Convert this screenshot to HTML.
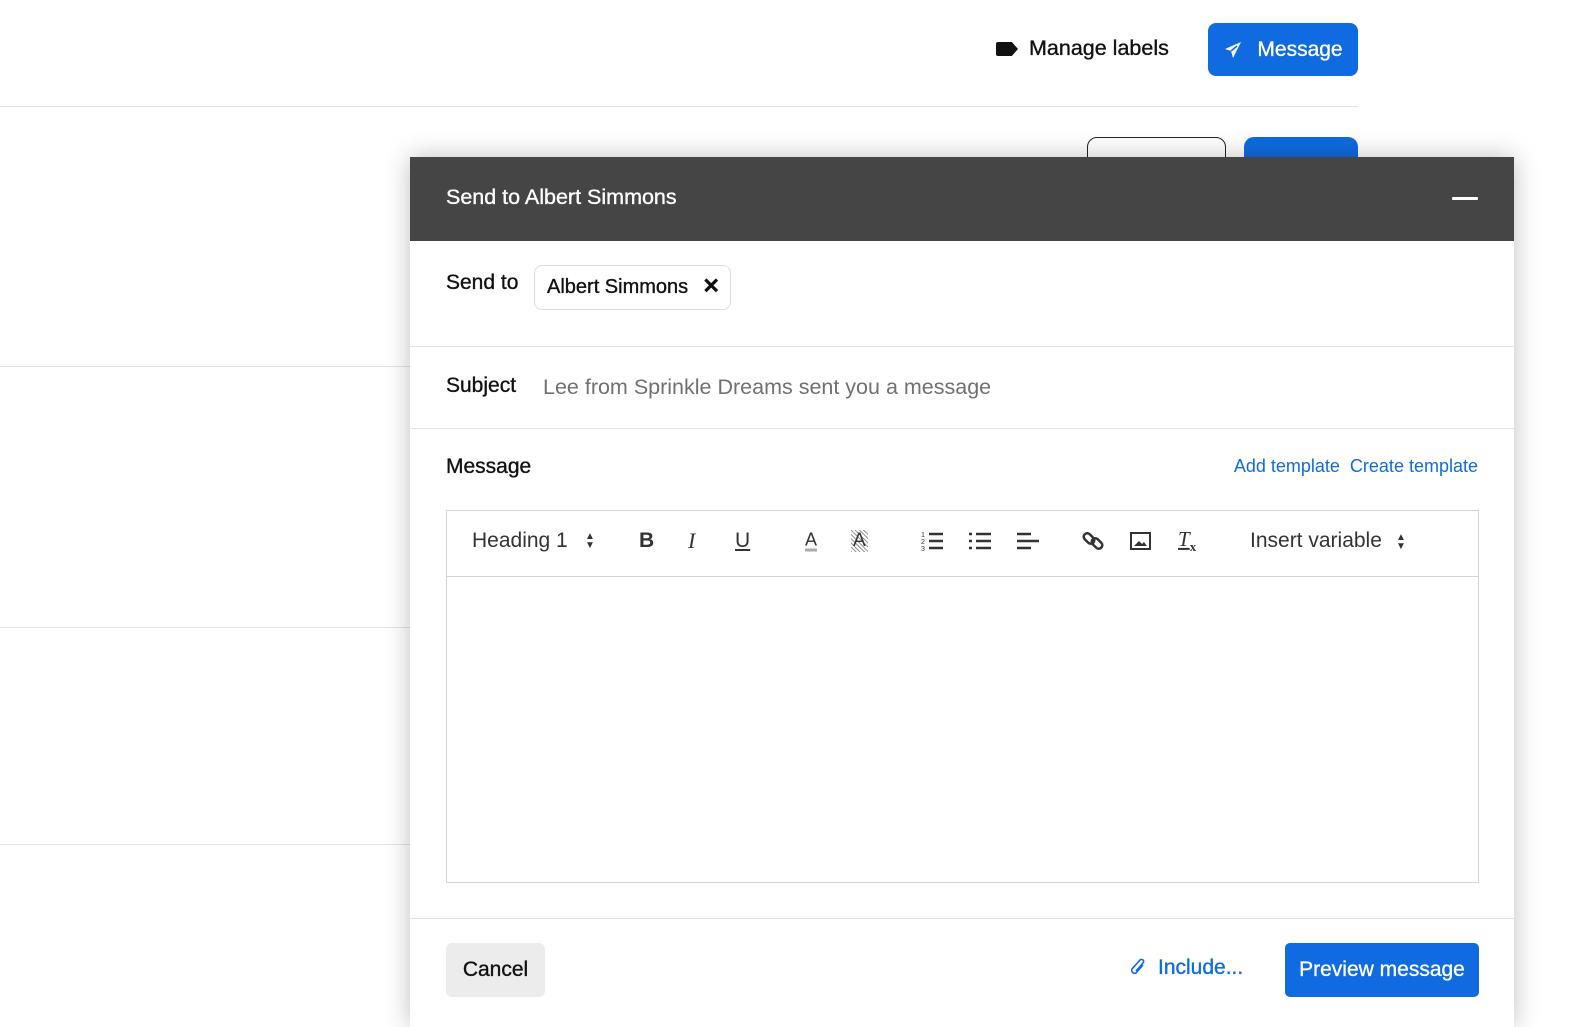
<!DOCTYPE html>
<html><head><meta charset="utf-8"><style>
*{box-sizing:border-box;margin:0;padding:0}
body{width:1576px;height:1024px;overflow:hidden;background:#fff;font-family:"Liberation Sans",sans-serif;color:#111;position:relative}
.abs{position:absolute}
.m{-webkit-text-stroke:0.35px currentColor}
.line{position:absolute;height:1px;background:#e2e2e2}
.btn{position:absolute;border-radius:8px;background:#0f6bdf;color:#fff;font-size:21px;display:flex;align-items:center;justify-content:center;-webkit-text-stroke:0.35px #fff}
.modal{position:absolute;left:410px;top:157px;width:1104px;height:870px;background:#fff;box-shadow:0 0 24px rgba(0,0,0,.25)}
.hdr{height:84px;background:#454545;color:#fff;font-size:21.5px;padding:28px 36px}
.lbl{position:absolute;font-size:21px;color:#111}
.tb{position:absolute;top:30px;transform:translateY(-50%);color:#333}
a{color:#0f6bdf;text-decoration:none}
</style></head><body>
<div class="abs" style="left:996px;top:42px;width:22px;height:14px;background:#111;border-radius:2px 0 0 2px;clip-path:polygon(0 0,72% 0,100% 50%,72% 100%,0 100%)"></div>
<div class="abs m" style="left:1029px;top:36px;font-size:21.5px">Manage labels</div>
<div class="btn" style="left:1208px;top:23px;width:150px;height:53px">
<svg width="20" height="20" viewBox="0 0 20 20" style="margin-right:14px"><path d="M18 2L2 9l6 2 2 7z" fill="#fff"/><path d="M8 11l6-5" stroke="#0f6bdf" stroke-width="1.5"/></svg>Message</div>
<div class="line" style="left:0;top:106px;width:1358px"></div>
<div class="abs" style="left:1087px;top:137px;width:139px;height:40px;border:1px solid #222;border-radius:10px"></div>
<div class="abs" style="left:1244px;top:137px;width:114px;height:40px;background:#0f6bdf;border-radius:10px"></div>
<div class="line" style="left:0;top:366px;width:410px"></div>
<div class="line" style="left:0;top:627px;width:410px"></div>
<div class="line" style="left:0;top:844px;width:410px"></div>

<div class="modal">
<div class="hdr m">Send to Albert Simmons<div class="abs" style="right:36px;top:40px;width:26px;height:3px;background:#fff;border-radius:1px"></div></div>
<div class="lbl m" style="left:36px;top:114px">Send to</div>
<div class="abs m" style="left:124px;top:108px;width:197px;height:45px;border:1px solid #ddd;border-radius:8px;font-size:20px;padding:10px 12px">Albert Simmons<span style="position:absolute;right:10px;top:8px;font-weight:bold;font-size:21px">✕</span></div>
<div class="line" style="left:0;top:189px;width:1104px"></div>
<div class="lbl m" style="left:36px;top:217px">Subject</div>
<div class="abs" style="left:133px;top:218px;font-size:21.5px;color:#707070">Lee from Sprinkle Dreams sent you a message</div>
<div class="line" style="left:0;top:271px;width:1104px"></div>
<div class="lbl m" style="left:36px;top:298px">Message</div>
<div class="abs" style="right:36px;top:299px;font-size:18px"><a>Add template</a>&nbsp; <a>Create template</a></div>
<div class="abs" style="left:36px;top:353px;width:1033px;height:373px;border:1px solid #d4d4d4">
<div style="height:66px;border-bottom:1px solid #d4d4d4;position:relative">
<div class="tb" style="left:25px;font-size:21px">Heading 1</div>
<div class="tb" style="left:138px;font-size:10px;line-height:9px">▲<br>▼</div>
<div class="tb" style="left:192px;font-size:21px;font-weight:bold">B</div>
<div class="tb" style="left:241px;font-size:22px;font-style:italic;font-family:'Liberation Serif'">I</div>
<div class="tb" style="left:288px;font-size:21px;text-decoration:underline">U</div>
<div class="tb" style="left:358px;font-size:18px;border-bottom:3px solid #aaa;line-height:18px">A</div>
<div class="tb" style="left:404px;font-size:19px;background:repeating-linear-gradient(45deg,#999 0 1px,#fff 1px 3px);padding:0 2px">A</div>
<svg class="tb" style="left:474px" width="22" height="20"><g stroke="#333" stroke-width="2.5"><path d="M8 3h14M8 10h14M8 17h14"/></g><g font-size="7" fill="#333"><text x="0" y="6">1</text><text x="0" y="13">2</text><text x="0" y="20">3</text></g></svg>
<svg class="tb" style="left:522px" width="22" height="20"><g stroke="#333" stroke-width="2.5"><path d="M7 3h15M7 10h15M7 17h15M0 3h3M0 10h3M0 17h3"/></g></svg>
<svg class="tb" style="left:570px" width="22" height="20"><g stroke="#333" stroke-width="2.5"><path d="M0 3h14M0 10h22M0 17h14"/></g></svg>
<svg class="tb" style="left:635px" width="22" height="22" viewBox="0 0 22 22"><g fill="none" stroke="#333" stroke-width="2.5"><rect x="1" y="5" width="12" height="7" rx="3.5" transform="rotate(45 7 8.5)"/><rect x="9" y="10" width="12" height="7" rx="3.5" transform="rotate(45 15 13.5)"/></g></svg>
<svg class="tb" style="left:683px" width="21" height="18"><rect x="1" y="1" width="19" height="16" fill="none" stroke="#333" stroke-width="2"/><path d="M4 14l5-5 3 3 2-2 3 4z" fill="#333"/></svg>
<div class="tb" style="left:731px;font-size:21px;font-style:italic;font-family:'Liberation Serif';text-decoration:underline">T<sub style="font-size:13px;font-weight:bold;font-style:normal">x</sub></div>
<div class="tb" style="left:803px;font-size:21px">Insert variable</div>
<div class="tb" style="left:949px;font-size:10px;line-height:9px;top:31px">▲<br>▼</div>
</div></div>
<div class="line" style="left:0;top:761px;width:1104px"></div>
<div class="abs m" style="left:36px;top:786px;width:99px;height:54px;background:#ececec;border-radius:6px;font-size:21px;display:flex;align-items:center;justify-content:center">Cancel</div>
<div class="abs m" style="left:718px;top:799px;font-size:21px;color:#0f6bdf;display:flex;align-items:center">
<svg width="20" height="22" viewBox="0 0 20 22" style="margin-right:10px"><path d="M15 8l-7 8a3 3 0 01-4-4l8-9a2 2 0 013 3l-7 8" fill="none" stroke="#0f6bdf" stroke-width="1.6"/></svg>Include...</div>
<div class="btn" style="left:875px;top:786px;width:194px;height:54px;border-radius:5px">Preview message</div>
</div>
</body></html>
